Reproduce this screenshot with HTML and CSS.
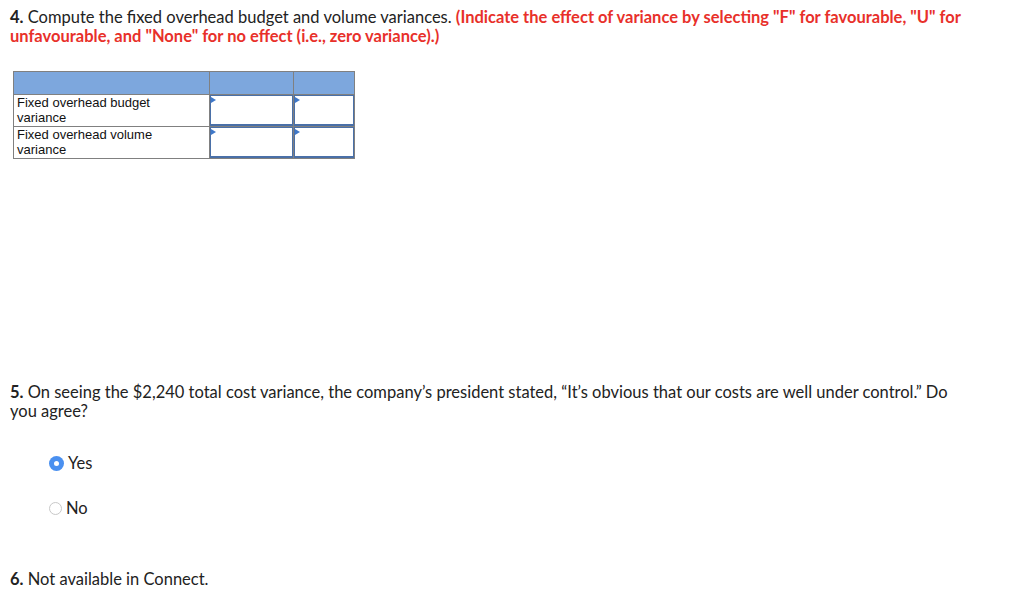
FILE: index.html
```html
<!DOCTYPE html>
<html>
<head>
<meta charset="utf-8">
<link rel="stylesheet" href="styles.css">
</head>
<body>
<div class="page">
  <p class="q q4"><b>4.</b> Compute the fixed overhead budget and volume variances. <span class="hint">(Indicate the effect of variance by selecting "F" for favourable, "U" for</span><br><span class="hint">unfavourable, and "None" for no effect (i.e., zero variance).)</span></p>

  <table class="grid">
    <tr class="head"><th class="c1"></th><th class="c2"></th><th class="c3"></th></tr>
    <tr><td class="label">Fixed overhead budget<br>variance</td><td class="inp"><div class="box"><span class="tri"></span></div></td><td class="inp"><div class="box"><span class="tri"></span></div></td></tr>
    <tr><td class="label">Fixed overhead volume<br>variance</td><td class="inp"><div class="box"><span class="tri"></span></div></td><td class="inp"><div class="box"><span class="tri"></span></div></td></tr>
  </table>

  <p class="q q5"><b>5.</b> On seeing the $2,240 total cost variance, the company’s president stated, “It’s obvious that our costs are well under control.” Do<br>you agree?</p>

  <div class="options">
    <label class="opt"><span class="radio on"></span>Yes</label>
    <label class="opt"><span class="radio"></span>No</label>
  </div>

  <p class="q q6"><b>6.</b> Not available in Connect.</p>
</div>
</body>
</html>
```

FILE: styles.css
```css
html, body { margin: 0; padding: 0; background: #fff; }
.page {
  padding: 8px 10px 0 10px;
  font-family: "Lato", "Open Sans", sans-serif;
  font-size: 16.5px;
  color: #222;
}
.q { margin: 0; line-height: 19px; width: 990px; white-space: nowrap; }
.q b { font-weight: 700; }
.hint { color: #e8302a; font-weight: 700; }
.grid {
  margin: 25px 0 0 3px;
  border-collapse: collapse;
  font-family: "Liberation Sans", Arial, sans-serif;
  font-size: 13px;
  color: #111;
}
.grid th, .grid td { border: 1px solid #808080; padding: 0; }
.grid .head th { background: #7da7dd; height: 22px; }
.c1 { width: 195px; }
.c2 { width: 83px; }
.c3 { width: 60px; }
.label { padding: 0 3px 0 3px !important; height: 31px; line-height: 15px; vertical-align: top; }
.inp { height: 31px; vertical-align: top; }
.box { position: relative; border: 1px solid #4a70a8; border-width: 1px 1px 2px 1px; box-sizing: border-box; height: 31px; }
.tri { position: absolute; left: 0; top: 1px; width: 0; height: 0; border-top: 3px solid transparent; border-bottom: 3px solid transparent; border-left: 5px solid #3f78c9; }
.q5 { margin-top: 224px; }
.options { display: flex; flex-direction: column; gap: 26px; margin: 33px 0 0 39px; }
.opt { display: flex; align-items: center; gap: 4px; line-height: 19px; }
.radio { width: 13px; height: 13px; border-radius: 50%; border: 1px solid #c8c8c8; box-sizing: border-box; background: #fff; }
.radio.on { width: 15px; height: 15px; border: none; background: #4a90f0; position: relative; }
.radio.on::after { content: ""; position: absolute; left: 5px; top: 5px; width: 5px; height: 5px; border-radius: 50%; background: #fff; }
.q6 { margin-top: 52px; }
```
